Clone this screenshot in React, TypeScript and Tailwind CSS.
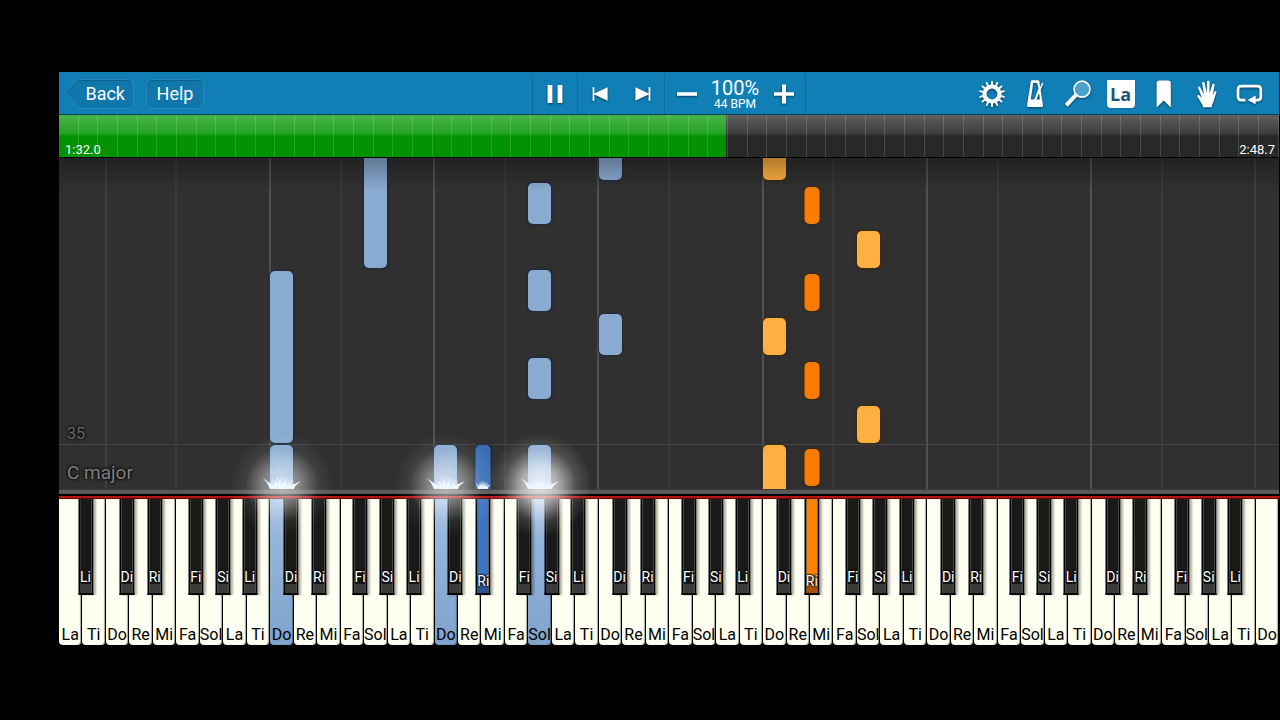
import React, { useState } from 'react';
import clsx from 'clsx';

type Hand = 'left' | 'right';

interface Note {
  key: number;
  sharp?: boolean;
  bottom: number;
  height: number;
  hand: Hand;
}

const WHITE_KEYS = 52;
const MEASURES = 62;
const NAMES = ['La', 'Ti', 'Do', 'Re', 'Mi', 'Fa', 'Sol'];

const SHARPS: Record<string, { label: string; place: string }> = {
  La: { label: 'Li', place: 'left-[113%]' },
  Do: { label: 'Di', place: 'left-[89%]' },
  Re: { label: 'Ri', place: 'left-[108%]' },
  Fa: { label: 'Fi', place: 'left-[83%]' },
  Sol: { label: 'Si', place: 'left-[99%]' },
};

const keys = Array.from({ length: WHITE_KEYS }, (_, i) => NAMES[i % 7]);

// bottom is the distance from the strike line
const notes: Note[] = [
  { key: 13, bottom: 221, height: 120, hand: 'left' },
  { key: 9, bottom: 46, height: 172, hand: 'left' },
  { key: 9, bottom: -8, height: 52, hand: 'left' },
  { key: 16, bottom: -8, height: 52, hand: 'left' },
  { key: 17, sharp: true, bottom: -8, height: 52, hand: 'left' },
  { key: 20, bottom: 265, height: 41, hand: 'left' },
  { key: 20, bottom: 178, height: 41, hand: 'left' },
  { key: 20, bottom: 90, height: 41, hand: 'left' },
  { key: 20, bottom: -8, height: 52, hand: 'left' },
  { key: 23, bottom: 309, height: 41, hand: 'left' },
  { key: 23, bottom: 134, height: 41, hand: 'left' },
  { key: 30, bottom: 309, height: 37, hand: 'right' },
  { key: 30, bottom: 134, height: 37, hand: 'right' },
  { key: 30, bottom: -8, height: 52, hand: 'right' },
  { key: 31, sharp: true, bottom: 265, height: 37, hand: 'right' },
  { key: 31, sharp: true, bottom: 178, height: 37, hand: 'right' },
  { key: 31, sharp: true, bottom: 90, height: 37, hand: 'right' },
  { key: 31, sharp: true, bottom: 3, height: 37, hand: 'right' },
  { key: 34, bottom: 221, height: 37, hand: 'right' },
  { key: 34, bottom: 46, height: 37, hand: 'right' },
];

const pressedWhite = [9, 16, 20];
const pressedSharp: Record<number, Hand> = { 17: 'left', 31: 'right' };

const flares = [
  { at: 9.5, glow: true, strong: false },
  { at: 16.5, glow: true, strong: false },
  { at: 18.08, glow: false, strong: false },
  { at: 20.5, glow: true, strong: true },
];

const percent = (units: number) => `${(units / WHITE_KEYS) * 100}%`;

const Icon: React.FC<{ children: React.ReactNode }> = ({ children }) => (
  <svg viewBox="0 0 28 28" className="h-7 w-7 drop-shadow-[0_1px_1px_rgba(0,0,0,0.5)]" fill="white" aria-hidden="true">
    {children}
  </svg>
);

const GearIcon = () => (
  <Icon>
    <circle cx="14" cy="14" r="7.5" fill="none" stroke="white" strokeWidth="4.2" />
    {Array.from({ length: 14 }, (_, i) => (
      <path key={i} d="M12.9 5 L13.2 0.9 H14.8 L15.1 5 Z" transform={`rotate(${(i * 360) / 14} 14 14)`} />
    ))}
  </Icon>
);

const MetronomeIcon = () => (
  <Icon>
    <path
      fillRule="evenodd"
      d="M9.8 1 Q10 0.3 11 0.3 H17 Q18 0.3 18.2 1 L22 25.6 Q22.2 27 21 27 H7 Q5.8 27 6 25.6 Z M12.2 3 L9.8 19.5 H13.2 L17.6 8.5 L16 3 Z M18 12 L15.2 19.5 H18.9 Z"
    />
    <path d="M14 20.5 L21.7 3" stroke="white" strokeWidth="1.6" fill="none" />
  </Icon>
);

const LensIcon = () => (
  <Icon>
    <circle cx="18" cy="9.2" r="8" fill="#4ba3cd" stroke="white" strokeWidth="1.7" />
    <path d="M11.8 15.2 L2.2 25.4" stroke="white" strokeWidth="4" fill="none" />
  </Icon>
);

const BookmarkIcon = () => (
  <Icon>
    <path d="M6.6 3.4 Q6.6 0.6 9.4 0.6 H18 Q20.8 0.6 20.8 3.4 V27.4 L13.7 20.6 L6.6 27.4 Z" />
  </Icon>
);

const HandIcon = () => (
  <Icon>
    <path d="M10 27.2 C9.8 24.6 8.6 23.6 7.4 21.4 L4.4 16.8 C3.8 15.2 5.6 14.6 6.6 15.6 L9 18.2 L5.2 8 C4.8 6.4 6.6 5.8 7.3 7.2 L10.9 14.2 L9.2 3.4 C9.1 1.6 11.3 1.4 11.7 3.1 L13.6 13.2 L14 1.9 C14.2 0.2 16.6 0.3 16.6 2 L16.5 13.6 L19.2 4.6 C19.8 3.1 21.9 3.6 21.6 5.2 L19.7 15.2 L21.4 11.6 C22.3 10.3 23.8 11 23.3 12.6 L20.8 20.4 C20 23.4 18.8 24.6 18.6 27.2 Z" />
  </Icon>
);

const LoopIcon = () => (
  <Icon>
    <path
      d="M9.4 20.2 H5.4 Q2 20.2 2 16.8 V9.6 Q2 6.2 5.4 6.2 H21.4 Q24.8 6.2 24.8 9.6 V16.8 Q24.8 20.2 21.4 20.2 H19"
      fill="none"
      stroke="white"
      strokeWidth="2.7"
    />
    <path d="M11.6 20 L19.6 15.6 V24.2 Z" />
  </Icon>
);

const PauseIcon = () => (
  <Icon>
    <path d="M6.6 5 H11.4 V23 H6.6 Z M16.6 5 H21.4 V23 H16.6 Z" />
  </Icon>
);

const PreviousIcon = () => (
  <Icon>
    <path d="M6.6 7.2 H8.4 V13.6 L21.6 7.2 V20.8 L8.4 14.4 V20.8 H6.6 Z" />
  </Icon>
);

const NextIcon = () => (
  <Icon>
    <path d="M21.4 7.2 H19.6 V13.6 L6.4 7.2 V20.8 L19.6 14.4 V20.8 H21.4 Z" />
  </Icon>
);

const MinusIcon = () => (
  <Icon>
    <path d="M4 12.2 H24 V15.8 H4 Z" />
  </Icon>
);

const PlusIcon = () => (
  <Icon>
    <path d="M12 4.4 H16 V12.2 H24 V15.8 H16 V23.6 H12 V15.8 H4 V12.2 H12 Z" />
  </Icon>
);

const IconButton: React.FC<{ label: string; onClick?: () => void; children: React.ReactNode }> = ({
  label,
  onClick,
  children,
}) => (
  <button type="button" aria-label={label} onClick={onClick} className="flex h-full w-[43px] items-center justify-center">
    {children}
  </button>
);

const Toolbar = () => {
  const [playing, setPlaying] = useState(true);

  return (
    <header className="grid h-[43px] grid-cols-[1fr_auto_1fr] border-b border-[#123f56] bg-[#107fb6] text-white">
      <div className="flex items-center gap-3 pt-0.5 pl-1.5">
        <button type="button" className="relative isolate flex h-8 w-[69px] items-center justify-end pr-[9px] text-lg leading-6">
          <svg viewBox="0 0 69 32" className="absolute inset-0 -z-10 h-8 w-[69px]" aria-hidden="true">
            <path
              d="M15 1.5 H65 Q68.5 1.5 68.5 5 V27 Q68.5 30.5 65 30.5 H15 Q13 30.5 11.5 28.5 L1 16 L11.5 3.5 Q13 1.5 15 1.5 Z"
              fill="#1077ab"
              stroke="#2a86b6"
            />
            <path d="M2 15 L12 3.5 Q13.5 2.5 15 2.5 H65" fill="none" stroke="#0b608c" />
          </svg>
          Back
        </button>
        <button
          type="button"
          className="h-[30px] w-[58px] rounded-md border border-[#2a86b6] bg-[#1077ab] text-lg leading-6 shadow-[inset_0_1px_1px_#0b608c]"
        >
          Help
        </button>
      </div>

      <div className="flex items-stretch pt-px">
        <div className="flex w-[45px] justify-center border-l border-[#0d6c9b]">
          <IconButton label={playing ? 'Pause' : 'Play'} onClick={() => setPlaying(!playing)}>
            <PauseIcon />
          </IconButton>
        </div>
        <div className="flex w-[87px] justify-center border-l border-[#0d6c9b]">
          <IconButton label="Previous measure">
            <PreviousIcon />
          </IconButton>
          <IconButton label="Next measure">
            <NextIcon />
          </IconButton>
        </div>
        <div className="flex w-[142px] items-center justify-center border-x border-[#0d6c9b]">
          <IconButton label="Slower">
            <MinusIcon />
          </IconButton>
          <div className="w-[54px] text-center">
            <div className="text-xl leading-5">100%</div>
            <div className="text-xs leading-3">44 BPM</div>
          </div>
          <IconButton label="Faster">
            <PlusIcon />
          </IconButton>
        </div>
      </div>

      <div className="flex items-center justify-end pt-0.5 pr-2">
        <IconButton label="Settings">
          <GearIcon />
        </IconButton>
        <IconButton label="Metronome">
          <MetronomeIcon />
        </IconButton>
        <IconButton label="Zoom">
          <LensIcon />
        </IconButton>
        <IconButton label="Note names">
          <span className="flex h-7 w-7 items-end justify-center rounded-sm rounded-t-none bg-white pb-1 font-['Open_Sans'] text-lg leading-5 font-bold text-[#1b5677] shadow-sm">
            La
          </span>
        </IconButton>
        <IconButton label="Bookmark">
          <BookmarkIcon />
        </IconButton>
        <IconButton label="Hands">
          <HandIcon />
        </IconButton>
        <IconButton label="Loop">
          <LoopIcon />
        </IconButton>
      </div>
    </header>
  );
};

const Timeline = () => (
  <div className="relative flex h-[43px] items-end justify-between border-b border-black bg-linear-to-b from-[#606060] via-[#3c3c3c] via-45% to-[#282828] to-50% px-1">
    <div
      className="absolute inset-y-0 left-0 bg-linear-to-b from-[#48b348] via-[#1fa31f] via-45% to-[#009200] to-50%"
      style={{ width: '54.7%' }}
    />
    <div className="absolute inset-0 flex">
      {Array.from({ length: MEASURES }, (_, i) => (
        <div key={i} className="flex-1 border-r border-white/15" />
      ))}
    </div>
    <span className="relative pl-0.5 text-[13px] leading-[14px] text-white">1:32.0</span>
    <span className="relative text-[13px] leading-[14px] text-white">2:48.7</span>
  </div>
);

const NoteBar: React.FC<{ note: Note }> = ({ note }) => (
  <div
    className={clsx(
      'absolute rounded-[5px]',
      note.sharp ? 'w-[15px] -translate-x-1/2' : 'w-[23px]',
      note.hand === 'left' && (note.sharp ? 'bg-[#3a6fb8]' : 'bg-[#89abd1]'),
      note.hand === 'right' && (note.sharp ? 'bg-[#f97c00]' : 'bg-[#ffb040]'),
      note.hand === 'left' ? 'shadow-[0_0_2px_1px_#1d2a3c]' : 'shadow-[0_0_2px_1px_#38280f]',
    )}
    style={{
      left: percent(note.key + (note.sharp ? 1.08 : 0)),
      bottom: note.bottom,
      height: note.height,
    }}
  />
);

const Flare: React.FC<{ at: number; glow: boolean; strong: boolean }> = ({ at, glow, strong }) => (
  <div className="pointer-events-none absolute top-full z-20 h-0 w-0" style={{ left: percent(at) }}>
    {glow && (
      <div
        className={clsx(
          'absolute -top-14 -left-13 h-26 w-26 rounded-full',
          strong
            ? 'bg-[radial-gradient(closest-side,rgba(255,255,255,0.85),rgba(255,255,255,0.6)_35%,rgba(255,255,255,0.15)_70%,transparent)]'
            : 'bg-[radial-gradient(closest-side,rgba(255,255,255,0.6),rgba(255,255,255,0.4)_35%,rgba(255,255,255,0.08)_70%,transparent)]',
        )}
      />
    )}
    <svg
      viewBox="0 0 40 18"
      preserveAspectRatio="none"
      className={clsx('absolute bottom-0', glow ? '-left-5 h-4 w-10' : '-left-2 h-2.5 w-4')}
      aria-hidden="true"
    >
      <path d="M9 15 L10 6 L13 10 L15 3 L18 8 L20 1 L22 8 L25 4 L27 9 L31 6 L32 15 Z" fill="#dcebfa" opacity="0.6" />
      <path
        d="M8 18 L5 11 L1 6 L9 12 L12 14 L13 9 L16 13 L18 7 L20 13 L23 9 L25 14 L28 10 L29 14 L39 9 L33 15 L32 18 Z"
        fill="#eef7ff"
      />
    </svg>
  </div>
);

// the outermost octave lines are as dim as the Fa lines
const laneLine = (name: string, i: number) => {
  if (name === 'Do') return i > 2 && i < 51 ? 'border-l-2 border-[#505050]' : 'border-l-2 border-[#3e3e3e]';
  if (name === 'Fa') return 'border-l-2 border-[#393939]';
  return '';
};

const NoteRoll = () => (
  <section className="relative h-[331px] bg-[#303030]">
    <div className="absolute inset-0 flex">
      {keys.map((name, i) => (
        <div key={i} className={clsx('w-0 flex-1', laneLine(name, i))} />
      ))}
    </div>
    <div className="relative flex h-full flex-col justify-end text-[#808080] [text-shadow:0_0_3px_#000,0_0_3px_#000]">
      <div className="pl-2 text-base leading-5 text-[#686868]">35</div>
      <div className="h-px bg-[#454545]" />
      <div className="pt-4 pb-1 pl-2 text-[19px] leading-6">C major</div>
    </div>
    <div className="absolute inset-0 overflow-hidden">
      {notes.map((note, i) => (
        <NoteBar key={i} note={note} />
      ))}
      <div className="absolute inset-x-0 top-0 h-8 bg-linear-to-b from-black/30 to-transparent" />
    </div>
    {flares.map((flare) => (
      <Flare key={flare.at} {...flare} />
    ))}
  </section>
);

const Keyboard = () => (
  <section aria-label="Keyboard" className="bg-black">
    <div className="h-[7px] border-t border-[#3a3a3a] border-b-2 border-b-black bg-[#585858]" />
    <div className="h-[3px] border-b border-[#5a0d0d] bg-[#b81414]" />
    <div className="flex h-[146px]">
      {keys.map((name, i) => {
        const sharp = i < WHITE_KEYS - 1 ? SHARPS[name] : undefined;
        const hand = pressedSharp[i];
        return (
          <div key={i} className="relative w-0 flex-1">
            <button
              type="button"
              className={clsx(
                'flex h-full w-full items-end justify-center rounded-b-[4px] border-r border-black text-base leading-5 text-black shadow-[inset_-1px_0_1px_rgba(0,0,0,0.35)]',
                pressedWhite.includes(i) ? 'bg-linear-to-b from-[#9dbce0] to-[#7fa3cc]' : 'bg-[#fffff2]',
              )}
            >
              {name}
            </button>
            {sharp && (
              <button
                type="button"
                className={clsx(
                  'absolute top-0 z-10 flex h-24 w-[15px] -translate-x-1/2 flex-col items-center justify-end border-x-2 border-b-2 border-black text-sm leading-4 text-white shadow-[2px_0_2px_rgba(0,0,0,0.3)]',
                  sharp.place,
                  !hand && 'bg-linear-to-b from-[#191919] from-90% to-[#3a3a3a] to-91% pb-2',
                  hand === 'left' && 'bg-linear-to-b from-[#3f74bf] from-80% to-[#2b548c] to-81% pb-1',
                  hand === 'right' && 'bg-linear-to-b from-[#ff8200] from-80% to-[#a85200] to-81% pb-1',
                )}
              >
                <span className="[text-shadow:0_0_2px_#000,0_0_2px_#000,0_0_2px_#000]">{sharp.label}</span>
              </button>
            )}
          </div>
        );
      })}
    </div>
  </section>
);

const App: React.FC = () => (
  <main className="min-h-screen bg-black py-18 pr-px pl-[59px] font-[Roboto,sans-serif] select-none">
    <Toolbar />
    <Timeline />
    <NoteRoll />
    <Keyboard />
  </main>
);

export default App;
